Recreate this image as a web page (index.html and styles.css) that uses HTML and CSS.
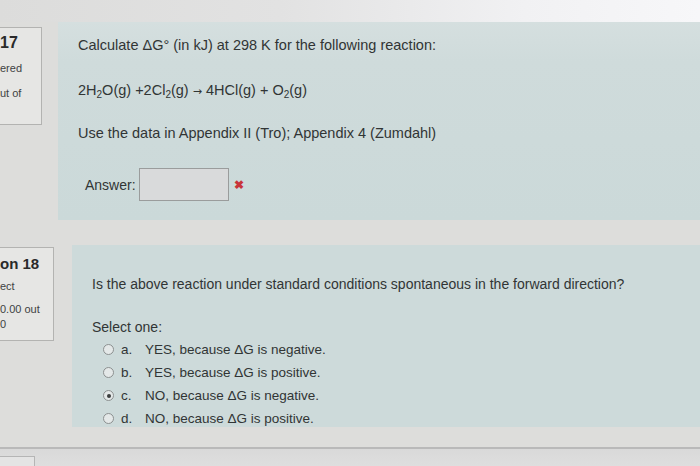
FILE: index.html
```html
<!DOCTYPE html>
<html>
<head>
<meta charset="utf-8">
<link rel="stylesheet" href="styles.css">
</head>
<body>
<div class="glare"></div>
<div class="q q1">
  <div class="info info1">
    <div class="qno">17</div>
    <div class="st st1">ered</div>
    <div class="st st2">ut of</div>
  </div>
  <div class="content content1">
    <p class="l1">Calculate ΔG° (in kJ) at 298 K for the following reaction:</p>
    <p class="l2">2H<sub>2</sub>O(g) +2Cl<sub>2</sub>(g) <span class="arr">→</span> 4HCl(g) + O<sub>2</sub>(g)</p>
    <p class="l3">Use the data in Appendix II (Tro); Appendix 4 (Zumdahl)</p>
    <div class="answer">
      <span class="alabel">Answer:</span>
      <span class="abox"></span>
      <span class="wrong">✖</span>
    </div>
  </div>
</div>
<div class="q q2">
  <div class="info info2">
    <div class="qno">on 18</div>
    <div class="st st3">ect</div>
    <div class="st st4">0.00 out</div>
    <div class="st st5">0</div>
  </div>
  <div class="content content2">
    <p class="m1">Is the above reaction under standard conditions spontaneous in the forward direction?</p>
    <p class="m2">Select one:</p>
    <div class="opts">
      <div class="opt"><span class="radio"></span><span class="olab">a.</span><span>YES, because ΔG is negative.</span></div>
      <div class="opt"><span class="radio"></span><span class="olab">b.</span><span>YES, because ΔG is positive.</span></div>
      <div class="opt"><span class="radio on"></span><span class="olab">c.</span><span>NO, because ΔG is negative.</span></div>
      <div class="opt"><span class="radio"></span><span class="olab">d.</span><span>NO, because ΔG is positive.</span></div>
    </div>
  </div>
</div>
<div class="foot">
  <div class="footbox"></div>
</div>
</body>
</html>
```
FILE: styles.css
```css
html, body {
  margin: 0;
  padding: 0;
}
body {
  width: 700px;
  height: 466px;
  overflow: hidden;
  background: #dddddb;
  font-family: "Liberation Sans", Arial, sans-serif;
  color: #313535;
}
.glare {
  height: 22px;
  background: linear-gradient(to right, #dcdcdb 0%, #e2e2e2 40%, #f1f1f3 75%, #f7f7f9 100%);
}
.q {
  display: flex;
  align-items: flex-start;
}
.q2 {
  margin-top: 25px;
}
.info {
  background: #e6e6e4;
  border: 1px solid #b3b3b1;
  border-left: none;
  box-sizing: border-box;
  overflow: hidden;
  white-space: nowrap;
}
.info1 {
  width: 42px;
  height: 98px;
  margin-top: 5px;
}
.info2 {
  width: 54px;
  height: 94px;
  margin-top: 2px;
}
.qno {
  font-weight: bold;
  font-size: 16px;
  line-height: 18px;
  color: #2a2a2a;
}
.info1 .qno { margin-top: 6px; }
.info2 .qno { margin-top: 7px; font-size: 15px; }
.st {
  font-size: 11px;
  line-height: 14px;
  color: #404242;
}
.st1 { margin-top: 9px; }
.st2 { margin-top: 11px; }
.st3 { margin-top: 6px; }
.st4 { margin-top: 9px; }
.st5 { margin-top: 1px; }
.content {
  flex: 1;
  background: #cfdbdb;
  box-sizing: border-box;
}
.content1 {
  margin-left: 16px;
  height: 198px;
  padding: 14px 0 0 20px;
  background: linear-gradient(to bottom, #d5dfdf 0%, #cfdbdb 20%, #cbd9d9 100%);
}
p {
  margin: 0;
  font-size: 14px;
  line-height: 18px;
}
.content1 p {
  font-size: 14.5px;
}
sub {
  font-size: 10px;
  line-height: 0;
  vertical-align: -3px;
}
.arr {
  font-family: "DejaVu Sans", sans-serif;
  font-size: 11px;
}
.l2 { margin-top: 27px; }
.l3 { margin-top: 23px; }
.answer {
  display: flex;
  align-items: center;
  margin-top: 26px;
  padding-left: 7px;
  font-size: 14px;
}
.alabel {
  width: 54px;
}
.abox {
  width: 90px;
  height: 33px;
  box-sizing: border-box;
  border: 1px solid #9a9c9c;
  background: #d9dadb;
}
.wrong {
  margin-left: 5px;
  color: #c8343a;
  font-size: 12px;
  font-weight: bold;
}
.content2 {
  margin-left: 18px;
  height: 182px;
  padding: 30px 0 0 20px;
  background: #cddada;
}
.m2 { margin-top: 25px; }
.opts {
  margin-top: 2px;
  padding-left: 11px;
  font-size: 13.5px;
}
.opt {
  display: flex;
  align-items: center;
  height: 23px;
}
.radio {
  width: 11px;
  height: 11px;
  box-sizing: border-box;
  border: 1px solid #8c9090;
  border-radius: 50%;
  background: #e4e8e8;
  margin-right: 7px;
  position: relative;
}
.radio.on::after {
  content: "";
  position: absolute;
  left: 2.5px;
  top: 2.5px;
  width: 4px;
  height: 4px;
  border-radius: 50%;
  background: #3a3d3d;
}
.olab {
  width: 24px;
}
.foot {
  margin-top: 20px;
  border-top: 2px solid #b9b9b9;
  height: 30px;
  background: linear-gradient(to bottom, #d9d9d9, #e2e2e2);
}
.footbox {
  margin-top: 7px;
  width: 35px;
  height: 14px;
  box-sizing: border-box;
  border: 1px solid #b5b5b5;
  border-left: none;
  background: #e4e4e4;
}
```
